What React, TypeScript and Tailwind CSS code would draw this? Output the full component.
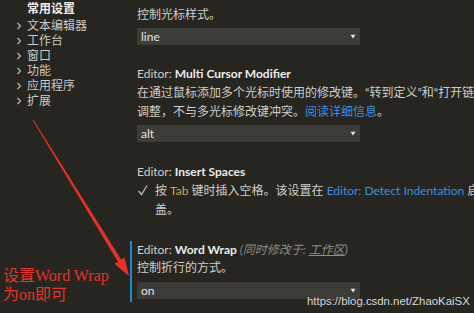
import React from "react";

const Chevron = () => (
  <svg width="6" height="8" viewBox="0 0 6 8" className="shrink-0">
    <path d="M1.5 1 L4.5 4 L1.5 7" fill="none" stroke="#bdbdbd" strokeWidth="1.1" />
  </svg>
);

const Caret = () => (
  <svg width="6" height="5" viewBox="0 0 6 5" className="shrink-0">
    <path d="M0.5 0.8 L5.5 0.8 L3 4.4 Z" fill="#e6e6e6" />
  </svg>
);

const Select = ({ value }: { value: string }) => (
  <div className="w-[223px] h-[17px] bg-[#3d3c36] flex items-center justify-between pl-[4px] pr-[4px] text-[12px] leading-[17px] text-[#e4e4e4]">
    <span>{value}</span>
    <Caret />
  </div>
);

const Heading = ({ bold }: { bold: string }) => (
  <div className="leading-[18px] h-[18px] text-[12px]">
    <span className="text-[#cfcfcb]">Editor: </span>
    <span className="font-bold text-[#ececec]">{bold}</span>
  </div>
);

export default function App() {
  const items = ["文本编辑器", "工作台", "窗口", "功能", "应用程序", "扩展"];
  return (
    <div className="relative w-[474px] h-[313px] overflow-hidden bg-[#262520] font-[family-name:Lato,'Noto_Sans_CJK_SC',sans-serif] text-[#cfcfcb]">
      <div className="flex h-full">
        {/* sidebar */}
        <div className="w-[130px] shrink-0 pt-[1px] text-[12px]">
          <div className="h-[17px] leading-[15px] pl-[27px] font-bold text-[#f0f0f0]">常用设置</div>
          {items.map((t) => (
            <div key={t} className="h-[15px] leading-[15px] flex items-center pl-[16px] gap-[5px] text-[#cacac6]">
              <Chevron />
              <span>{t}</span>
            </div>
          ))}
        </div>
        {/* content */}
        <div className="flex-1 min-w-0 overflow-hidden whitespace-nowrap pt-[6px] text-[12px]">
          <div className="border-l-2 border-transparent pl-[5px]">
            <div className="leading-[18px] h-[18px]">控制光标样式。</div>
            <div className="mt-[4px]">
              <Select value="line" />
            </div>
          </div>

          <div className="border-l-2 border-transparent pl-[5px] mt-[20px]">
            <Heading bold="Multi Cursor Modifier" />
            <div className="leading-[19px]">
              在通过鼠标添加多个光标时使用的修改键。“转到定义”和“打开链接”
            </div>
            <div className="leading-[19px]">
              调整，不与多光标修改键冲突。<span className="text-[#3f8ee0]">阅读详细信息</span>。
            </div>
            <div className="mt-[4px]">
              <Select value="alt" />
            </div>
          </div>

          <div className="border-l-2 border-transparent pl-[5px] mt-[21px]">
            <Heading bold="Insert Spaces" />
            <div className="flex items-start leading-[19px]">
              <svg width="18" height="19" viewBox="0 0 18 19" className="shrink-0">
                <path d="M1.5 10 L4.5 13.5 L10 4.5" fill="none" stroke="#b4b4b0" strokeWidth="1.4" />
              </svg>
              <div>
                <div>
                  按 <span className="text-[#c9a45c]">Tab</span> 键时插入空格。该设置在{" "}
                  <span className="text-[#3f8ee0]">Editor: Detect Indentation</span> 启用
                </div>
                <div>盖。</div>
              </div>
            </div>
          </div>

          <div className="border-l-2 border-[#1f8ad2] pl-[5px] mt-[22px] pb-[3px]">
            <div className="leading-[18px] h-[18px] text-[12px]">
              <span className="text-[#cfcfcb]">Editor: </span>
              <span className="font-bold text-[#ececec]">Word Wrap</span>
              <span className="italic text-[#8c8c88]">
                {" "}(同时修改于: <span className="underline">工作区</span>)
              </span>
            </div>
            <div className="leading-[18px] h-[18px]">控制折行的方式。</div>
            <div className="mt-[5px]">
              <Select value="on" />
            </div>
          </div>
        </div>
      </div>

      {/* annotation arrow */}
      <svg className="absolute left-0 top-0" width="474" height="313" viewBox="0 0 474 313">
        <polygon points="32.6,120.3 33.4,119.7 121.3,259.7 117.9,261.8" fill="#e8302b" />
        <polygon points="129,276 114.5,263.8 124.7,257.6" fill="#e8302b" />
      </svg>

      {/* annotation text */}
      <div className="absolute left-[3px] top-[266px] text-[16px] leading-[19px] text-[#e0362f] font-[family-name:'Liberation_Serif','Noto_Sans_CJK_SC',serif]">
        <div>设置Word Wrap</div>
        <div>为on即可</div>
      </div>

      {/* watermark */}
      <div className="absolute left-[307px] top-[294px] text-[11.4px] leading-[14px] text-[#dadada] font-[family-name:'Liberation_Sans',Arial,sans-serif]">
        https://blog.csdn.net/ZhaoKaiSX
      </div>
    </div>
  );
}
